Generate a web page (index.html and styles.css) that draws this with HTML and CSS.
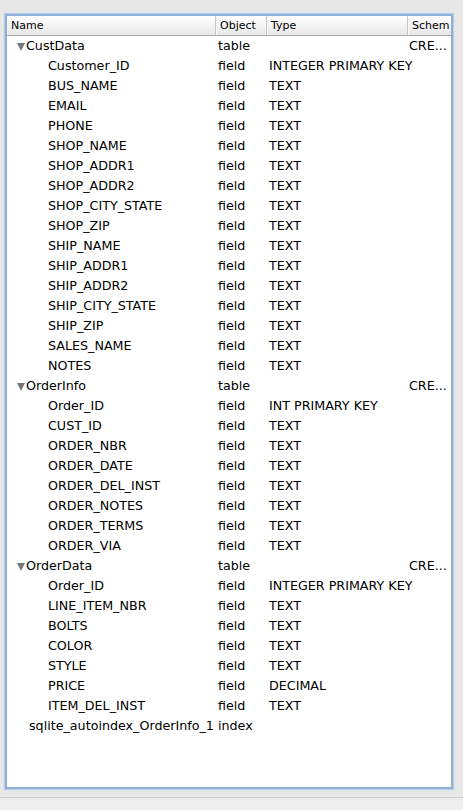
FILE: index.html
```
<!DOCTYPE html>
<html>
<head>
<meta charset="utf-8">
<link rel="stylesheet" href="styles.css">
</head>
<body>
<div class="top">
  <div class="panel">
    <div class="head">
      <div class="hc c-name">Name</div>
      <div class="hc c-obj">Object</div>
      <div class="hc c-type">Type</div>
      <div class="hc c-sch">Schem</div>
    </div>
    <div class="rows">
      <div class="row"><div class="c-name lv0"><span class="tri"></span>CustData</div><div class="c-obj">table</div><div class="c-type"></div><div class="c-sch">CRE...</div></div>
      <div class="row"><div class="c-name lv1">Customer_ID</div><div class="c-obj">field</div><div class="c-type">INTEGER PRIMARY KEY</div><div class="c-sch"></div></div>
      <div class="row"><div class="c-name lv1">BUS_NAME</div><div class="c-obj">field</div><div class="c-type">TEXT</div><div class="c-sch"></div></div>
      <div class="row"><div class="c-name lv1">EMAIL</div><div class="c-obj">field</div><div class="c-type">TEXT</div><div class="c-sch"></div></div>
      <div class="row"><div class="c-name lv1">PHONE</div><div class="c-obj">field</div><div class="c-type">TEXT</div><div class="c-sch"></div></div>
      <div class="row"><div class="c-name lv1">SHOP_NAME</div><div class="c-obj">field</div><div class="c-type">TEXT</div><div class="c-sch"></div></div>
      <div class="row"><div class="c-name lv1">SHOP_ADDR1</div><div class="c-obj">field</div><div class="c-type">TEXT</div><div class="c-sch"></div></div>
      <div class="row"><div class="c-name lv1">SHOP_ADDR2</div><div class="c-obj">field</div><div class="c-type">TEXT</div><div class="c-sch"></div></div>
      <div class="row"><div class="c-name lv1">SHOP_CITY_STATE</div><div class="c-obj">field</div><div class="c-type">TEXT</div><div class="c-sch"></div></div>
      <div class="row"><div class="c-name lv1">SHOP_ZIP</div><div class="c-obj">field</div><div class="c-type">TEXT</div><div class="c-sch"></div></div>
      <div class="row"><div class="c-name lv1">SHIP_NAME</div><div class="c-obj">field</div><div class="c-type">TEXT</div><div class="c-sch"></div></div>
      <div class="row"><div class="c-name lv1">SHIP_ADDR1</div><div class="c-obj">field</div><div class="c-type">TEXT</div><div class="c-sch"></div></div>
      <div class="row"><div class="c-name lv1">SHIP_ADDR2</div><div class="c-obj">field</div><div class="c-type">TEXT</div><div class="c-sch"></div></div>
      <div class="row"><div class="c-name lv1">SHIP_CITY_STATE</div><div class="c-obj">field</div><div class="c-type">TEXT</div><div class="c-sch"></div></div>
      <div class="row"><div class="c-name lv1">SHIP_ZIP</div><div class="c-obj">field</div><div class="c-type">TEXT</div><div class="c-sch"></div></div>
      <div class="row"><div class="c-name lv1">SALES_NAME</div><div class="c-obj">field</div><div class="c-type">TEXT</div><div class="c-sch"></div></div>
      <div class="row"><div class="c-name lv1">NOTES</div><div class="c-obj">field</div><div class="c-type">TEXT</div><div class="c-sch"></div></div>
      <div class="row"><div class="c-name lv0"><span class="tri"></span>OrderInfo</div><div class="c-obj">table</div><div class="c-type"></div><div class="c-sch">CRE...</div></div>
      <div class="row"><div class="c-name lv1">Order_ID</div><div class="c-obj">field</div><div class="c-type">INT PRIMARY KEY</div><div class="c-sch"></div></div>
      <div class="row"><div class="c-name lv1">CUST_ID</div><div class="c-obj">field</div><div class="c-type">TEXT</div><div class="c-sch"></div></div>
      <div class="row"><div class="c-name lv1">ORDER_NBR</div><div class="c-obj">field</div><div class="c-type">TEXT</div><div class="c-sch"></div></div>
      <div class="row"><div class="c-name lv1">ORDER_DATE</div><div class="c-obj">field</div><div class="c-type">TEXT</div><div class="c-sch"></div></div>
      <div class="row"><div class="c-name lv1">ORDER_DEL_INST</div><div class="c-obj">field</div><div class="c-type">TEXT</div><div class="c-sch"></div></div>
      <div class="row"><div class="c-name lv1">ORDER_NOTES</div><div class="c-obj">field</div><div class="c-type">TEXT</div><div class="c-sch"></div></div>
      <div class="row"><div class="c-name lv1">ORDER_TERMS</div><div class="c-obj">field</div><div class="c-type">TEXT</div><div class="c-sch"></div></div>
      <div class="row"><div class="c-name lv1">ORDER_VIA</div><div class="c-obj">field</div><div class="c-type">TEXT</div><div class="c-sch"></div></div>
      <div class="row"><div class="c-name lv0"><span class="tri"></span>OrderData</div><div class="c-obj">table</div><div class="c-type"></div><div class="c-sch">CRE...</div></div>
      <div class="row"><div class="c-name lv1">Order_ID</div><div class="c-obj">field</div><div class="c-type">INTEGER PRIMARY KEY</div><div class="c-sch"></div></div>
      <div class="row"><div class="c-name lv1">LINE_ITEM_NBR</div><div class="c-obj">field</div><div class="c-type">TEXT</div><div class="c-sch"></div></div>
      <div class="row"><div class="c-name lv1">BOLTS</div><div class="c-obj">field</div><div class="c-type">TEXT</div><div class="c-sch"></div></div>
      <div class="row"><div class="c-name lv1">COLOR</div><div class="c-obj">field</div><div class="c-type">TEXT</div><div class="c-sch"></div></div>
      <div class="row"><div class="c-name lv1">STYLE</div><div class="c-obj">field</div><div class="c-type">TEXT</div><div class="c-sch"></div></div>
      <div class="row"><div class="c-name lv1">PRICE</div><div class="c-obj">field</div><div class="c-type">DECIMAL</div><div class="c-sch"></div></div>
      <div class="row"><div class="c-name lv1">ITEM_DEL_INST</div><div class="c-obj">field</div><div class="c-type">TEXT</div><div class="c-sch"></div></div>
      <div class="row"><div class="c-name lvi">sqlite_autoindex_OrderInfo_1</div><div class="c-obj">index</div><div class="c-type"></div><div class="c-sch"></div></div>
    </div>
  </div>
</div>
<div class="bottom"></div>
</body>
</html>
```
FILE: styles.css
```
html, body {
  margin: 0;
  padding: 0;
}
body {
  width: 463px;
  height: 810px;
  overflow: hidden;
  background: #e8e8e8;
  font-family: "DejaVu Sans", "Liberation Sans", sans-serif;
  font-size: 12.7px;
  color: #000;
  display: flex;
  flex-direction: column;
}
.top {
  height: 797px;
  padding: 14px 0 0 5px;
  box-sizing: border-box;
}
.panel {
  width: 448px;
  height: 775px;
  box-sizing: border-box;
  border: 2px solid #8eb0d8;
  box-shadow: 0 0 0 1px #b9cde6, 0 0 2px 1px #cddbec;
  background: #fff;
  display: flex;
  flex-direction: column;
  overflow: hidden;
}
.head {
  height: 20px;
  display: flex;
  box-sizing: border-box;
  border-bottom: 1px solid #a9a9a9;
  background: linear-gradient(#ffffff, #f4f4f4 50%, #e6e6e6);
  font-size: 11px;
}
.hc {
  line-height: 20px;
  box-sizing: border-box;
  padding-left: 4px;
  border-right: 1px solid #c4c4c4;
  box-shadow: inset 1px 0 0 #fafafa;
  white-space: nowrap;
  overflow: hidden;
}
.head .c-sch { border-right: none; }
.c-name { width: 209px; flex: none; }
.c-obj { width: 51px; flex: none; }
.c-type { width: 141px; flex: none; }
.c-sch { width: 43px; flex: none; overflow: hidden; white-space: nowrap; }
.row {
  height: 20px;
  line-height: 20px;
  display: flex;
  white-space: nowrap;
}
.row > div {
  box-sizing: border-box;
  overflow: visible;
}
.row .c-obj { padding-left: 2px; }
.row .c-type { padding-left: 2px; }
.row .c-sch { padding-left: 1px; }
.lv0 {
  padding-left: 10px;
  display: flex;
  align-items: center;
}
.lv1 { padding-left: 41px; }
.lvi { padding-left: 22px; overflow: hidden; }
.tri {
  width: 0;
  height: 0;
  border-left: 4.5px solid transparent;
  border-right: 4.5px solid transparent;
  border-top: 8px solid #777;
  margin-right: 1px;
  margin-top: 1px;
}
.bottom {
  flex: 1;
  border-top: 1px solid #d2d2d2;
  background: #ededed;
}
```
